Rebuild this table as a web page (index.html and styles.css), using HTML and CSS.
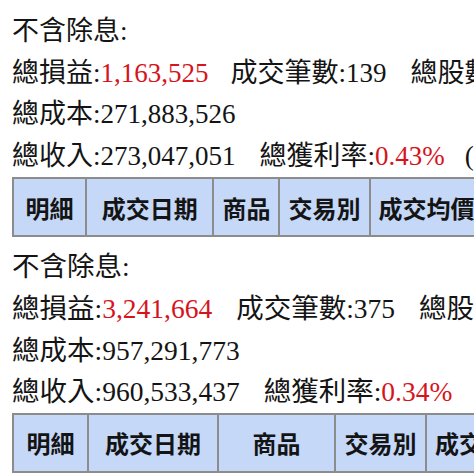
FILE: index.html
```html
<!DOCTYPE html>
<html lang="zh-Hant">
<head>
<meta charset="utf-8">
<link rel="stylesheet" href="styles.css">
</head>
<body>
<section class="summary s1">
  <div class="line">不含除息:</div>
  <div class="line">總損益:<span class="red">1,163,525</span><span class="item i1">成交筆數:139</span><span class="item">總股數:1,234,000</span></div>
  <div class="line">總成本:271,883,526</div>
  <div class="line">總收入:273,047,051<span class="item">總獲利率:<span class="red">0.43%</span></span><span class="item2">(含手續費)</span></div>
</section>
<table class="detail t1">
  <colgroup><col style="width:73px"><col style="width:127px"><col style="width:66px"><col style="width:90px"><col style="width:112px"><col style="width:112px"></colgroup>
  <tr><th>明細</th><th>成交日期</th><th>商品</th><th>交易別</th><th class="left">成交均價</th><th>成交股數</th></tr>
</table>
<section class="summary s2">
  <div class="line">不含除息:</div>
  <div class="line">總損益:<span class="red">3,241,664</span><span class="item">成交筆數:375</span><span class="item">總股數:3,456,000</span></div>
  <div class="line">總成本:957,291,773</div>
  <div class="line">總收入:960,533,437<span class="item">總獲利率:<span class="red">0.34%</span></span></div>
</section>
<table class="detail t2">
  <colgroup><col style="width:75px"><col style="width:130px"><col style="width:117px"><col style="width:91px"><col style="width:112px"><col style="width:112px"></colgroup>
  <tr><th>明細</th><th>成交日期</th><th>商品</th><th>交易別</th><th class="left">成交均價</th><th>成交股數</th></tr>
</table>
</body>
</html>
```
FILE: styles.css
```css
html {
  overflow: hidden;
  background: #fff;
}
body {
  margin: 0;
  padding: 11px 0 0 12px;
  font-family: "Liberation Serif", "Noto Sans CJK TC", serif;
  color: #141414;
}
.summary {
  white-space: nowrap;
}
.s1 {
  font-size: 27px;
}
.s2 {
  font-size: 27.5px;
  margin-top: 9px;
}
.line {
  line-height: 41.6px;
  height: 41.6px;
}
.red {
  color: #d6141d;
}
.item {
  margin-left: 24px;
}
.item.i1 {
  margin-left: 22px;
}
.item2 {
  margin-left: 20px;
}
.detail {
  border-collapse: collapse;
  table-layout: fixed;
  width: 583px;
}
.detail th {
  background: #c5d8f8;
  border: 2px solid #8c8c8c;
  height: 56px;
  padding: 0 8px;
  font-family: "Liberation Sans", "Noto Sans CJK TC", sans-serif;
  font-weight: bold;
  font-size: 24px;
  color: #141414;
  text-align: center;
  white-space: nowrap;
  overflow: hidden;
}
.detail th.left {
  text-align: left;
}
```
